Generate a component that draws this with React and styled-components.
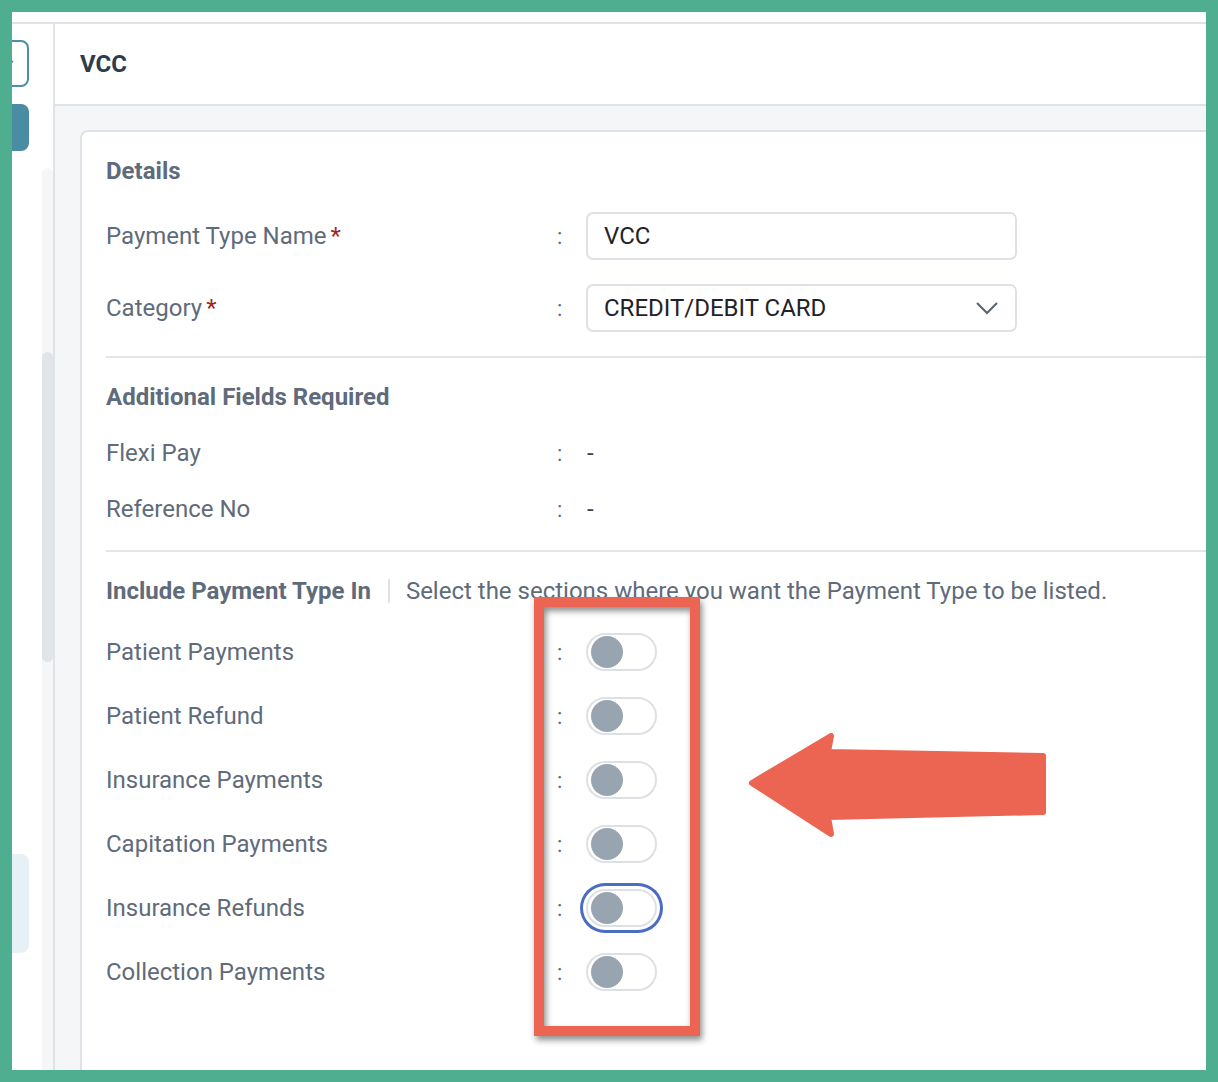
import React from 'react';
import styled, { createGlobalStyle } from 'styled-components';

const Global = createGlobalStyle`
  body {
    margin: 0;
    font-family: Roboto, "Liberation Sans", sans-serif;
  }
`;

const detailRows = [
  { label: 'Payment Type Name', required: true, kind: 'input', value: 'VCC' },
  { label: 'Category', required: true, kind: 'select', value: 'CREDIT/DEBIT CARD' },
];

const extraFields = ['Flexi Pay', 'Reference No'];

const includeIn = [
  'Patient Payments',
  'Patient Refund',
  'Insurance Payments',
  'Capitation Payments',
  'Insurance Refunds',
  'Collection Payments',
];

export default function App() {
  return (
    <Frame>
      <Global />
      <TopGap />
      <Shell>
        <Sidebar>
          <SideColumn>
            <FilterBox>
              <svg width="12" height="8" viewBox="0 0 12 8">
                <path d="M1 1l5 5 5-5" fill="none" stroke="#4b91a5" strokeWidth="1.6" />
              </svg>
            </FilterBox>
            <ActionButton />
            <InfoBox />
          </SideColumn>
          <Track>
            <Thumb />
          </Track>
        </Sidebar>
        <Main>
          <Header>VCC</Header>
          <Body>
            <Card>
              <Section $first>
                <Heading>Details</Heading>
                <DetailList>
                  {detailRows.map((r) => (
                    <FieldRow key={r.label} $h={48}>
                      <Label>
                        {r.label}
                        {r.required && <Star>*</Star>}
                      </Label>
                      <Colon>:</Colon>
                      <Field>
                        {r.value}
                        {r.kind === 'select' && (
                          <svg width="24" height="14" viewBox="0 0 24 14">
                            <path d="M2 2l10 10 10-10" fill="none" stroke="#59636e" strokeWidth="2" />
                          </svg>
                        )}
                      </Field>
                    </FieldRow>
                  ))}
                </DetailList>
              </Section>
              <Section>
                <Heading>Additional Fields Required</Heading>
                <ExtraList>
                  {extraFields.map((f) => (
                    <FieldRow key={f} $h={56}>
                      <Label>{f}</Label>
                      <Colon>:</Colon>
                      <Value>-</Value>
                    </FieldRow>
                  ))}
                </ExtraList>
              </Section>
              <Section>
                <HeadingLine>
                  <Heading>Include Payment Type In</Heading>
                  <Separator />
                  <Hint>Select the sections where you want the Payment Type to be listed.</Hint>
                </HeadingLine>
                <ToggleList>
                  {includeIn.map((t) => (
                    <FieldRow key={t} $h={64}>
                      <Label>{t}</Label>
                      <Colon>:</Colon>
                      <Toggle $focused={t === 'Insurance Refunds'}>
                        <Knob />
                      </Toggle>
                    </FieldRow>
                  ))}
                </ToggleList>
              </Section>
            </Card>
          </Body>
        </Main>
      </Shell>
      <Highlight />
      <Arrow width="310" height="120" viewBox="0 0 310 120">
        <polygon
          points="4,50 83,3 80,19 295,23 295,79 80,84 83,101"
          fill="#ec6553"
          stroke="#ec6553"
          strokeWidth="6"
          strokeLinejoin="round"
        />
      </Arrow>
    </Frame>
  );
}

const Frame = styled.div`
  position: relative;
  width: 1218px;
  height: 1082px;
  box-sizing: border-box;
  border: 12px solid #4fae8f;
  background: #fff;
  display: flex;
  flex-direction: column;
  overflow: hidden;
`;

const TopGap = styled.div`
  height: 10px;
  flex: none;
`;

const Shell = styled.div`
  flex: 1;
  min-height: 0;
  display: flex;
  border-top: 2px solid #dfe3e8;
`;

const Sidebar = styled.div`
  width: 41px;
  flex: none;
  display: flex;
  border-right: 2px solid #dfe3e8;
  overflow: hidden;
`;

const SideColumn = styled.div`
  width: 17px;
  margin-right: 13px;
  flex: none;
  display: flex;
  flex-direction: column;
  padding-top: 16px;
`;

const FilterBox = styled.div`
  margin-left: -28px;
  height: 47px;
  box-sizing: border-box;
  border: 2px solid #4b91a5;
  border-radius: 8px;
  display: flex;
  align-items: center;
  justify-content: flex-end;
  padding-right: 13px;
`;

const ActionButton = styled.div`
  margin-left: -28px;
  margin-top: 17px;
  height: 47px;
  border-radius: 8px;
  background: #4a8da3;
`;

const InfoBox = styled.div`
  margin-left: -28px;
  margin-top: 703px;
  height: 99px;
  border-radius: 8px;
  background: #e6f1f6;
`;

const Track = styled.div`
  width: 11px;
  margin-top: 144px;
  padding-top: 184px;
  background: #f5f6f8;
  border-radius: 6px 6px 0 0;
`;

const Thumb = styled.div`
  height: 310px;
  border-radius: 6px;
  background: #e1e4e8;
`;

const Main = styled.div`
  flex: 1;
  min-width: 0;
  display: flex;
  flex-direction: column;
  overflow: hidden;
`;

const Header = styled.div`
  height: 80px;
  flex: none;
  display: flex;
  align-items: center;
  padding-left: 25px;
  border-bottom: 2px solid #dfe3e8;
  font-size: 24px;
  font-weight: 700;
  color: #2f3b4c;
`;

const Body = styled.div`
  flex: 1;
  display: flex;
  flex-direction: column;
  background: #f5f6f8;
  padding: 24px 0 0 25px;
`;

const Card = styled.div`
  flex: 1;
  margin-right: -40px;
  background: #fff;
  border: 2px solid #dfe3e8;
  border-bottom: none;
  border-radius: 8px 8px 0 0;
  padding-left: 24px;
`;

const Section = styled.div`
  padding: 24px 0;
  border-top: ${(p) => (p.$first ? 'none' : '2px solid #e2e5e9')};
`;

const Heading = styled.div`
  font-size: 24px;
  line-height: 30px;
  font-weight: 700;
  color: #5f6b7a;
`;

const HeadingLine = styled.div`
  display: flex;
  align-items: center;
`;

const Separator = styled.div`
  width: 2px;
  height: 24px;
  background: #dfe3e8;
  margin: 0 16px 0 17px;
`;

const Hint = styled.div`
  font-size: 24px;
  line-height: 30px;
  color: #5f6b7a;
`;

const DetailList = styled.div`
  margin-top: 26px;
  display: flex;
  flex-direction: column;
  gap: 24px;
`;

const ExtraList = styled.div`
  margin-top: 13px;
  margin-bottom: -11px;
`;

const ToggleList = styled.div`
  margin-top: 14px;
`;

const FieldRow = styled.div`
  display: grid;
  grid-template-columns: 451px 29px auto;
  align-items: center;
  height: ${(p) => p.$h}px;
`;

const Label = styled.div`
  font-size: 24px;
  color: #5f6b7a;
  white-space: nowrap;
`;

const Star = styled.span`
  color: #a42424;
  margin-left: 4px;
`;

const Colon = styled.div`
  font-size: 22px;
  color: #5f6b7a;
`;

const Value = styled.div`
  font-size: 24px;
  color: #3b4350;
  padding-left: 1px;
`;

const Field = styled.div`
  width: 431px;
  height: 48px;
  box-sizing: border-box;
  border: 2px solid #dde1e6;
  border-radius: 7px;
  display: flex;
  align-items: center;
  justify-content: space-between;
  padding: 0 16px 0 16px;
  font-size: 24px;
  color: #1f2328;
`;

const Toggle = styled.div`
  width: 71px;
  height: 38px;
  box-sizing: border-box;
  border: 2px solid #dde1e6;
  border-radius: 19px;
  background: #fff;
  display: flex;
  align-items: center;
  padding-left: 3px;
  box-shadow: ${(p) => (p.$focused ? '0 0 0 3px #fff, 0 0 0 6px #4a6cc2' : 'none')};
`;

const Knob = styled.div`
  width: 32px;
  height: 32px;
  border-radius: 50%;
  background: #98a4af;
`;

const Highlight = styled.div`
  position: absolute;
  left: 522px;
  top: 585px;
  width: 166px;
  height: 439px;
  box-sizing: border-box;
  border: 10px solid #ec6553;
  filter: drop-shadow(2px 4px 3px rgba(0, 0, 0, 0.45));
`;

const Arrow = styled.svg`
  position: absolute;
  left: 736px;
  top: 721px;
`;
